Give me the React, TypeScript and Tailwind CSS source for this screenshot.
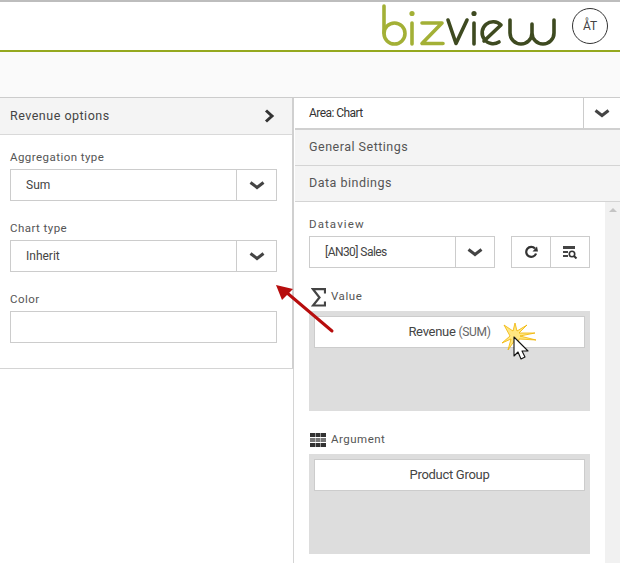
import type { ReactNode } from "react";

const font = { fontFamily: "Roboto, sans-serif" };

function Logo() {
  return (
    <svg width="178" height="48" viewBox="0 2 178 48" fill="none" strokeLinecap="round" strokeLinejoin="round">
      <g stroke="#a3b036" strokeWidth="3.6">
        <path d="M3 6V33" />
        <circle cx="13.5" cy="33.5" r="10.5" />
        <path d="M31 23V44" />
        <path d="M41 23H61L41 43.5H62" />
      </g>
      <circle cx="31" cy="13.5" r="2.6" fill="#a3b036" />
      <g stroke="#3e4a20" strokeWidth="3.6">
        <path d="M67 20L75 43.5L86 20" />
        <path d="M93 23V44" />
        <path d="M103 41L120 25A11 11 0 1 0 118 42" />
        <path d="M129 20V33A11 11 0 0 0 151 33V24V33A11 11 0 0 0 173 33V20" />
      </g>
      <circle cx="93" cy="13.5" r="2.6" fill="#3e4a20" />
    </svg>
  );
}

function Chevron() {
  return (
    <svg width="16" height="9" viewBox="0 0 16 9" fill="none">
      <path d="M1.5 1.5L8 6.5L14.5 1.5" stroke="#444444" strokeWidth="3" />
    </svg>
  );
}

function Select({
  value,
  divider = "w-[40px]",
  className = "",
  textClass = "",
}: {
  value: string;
  divider?: string;
  className?: string;
  textClass?: string;
}) {
  return (
    <div className={`flex h-[32px] border border-[#cccccc] bg-white ${className}`}>
      <span className={`flex flex-1 items-center pl-[15px] text-[12px] text-[#444444] ${textClass}`}>{value}</span>
      <span className={`flex items-center justify-center border-l border-[#cccccc] ${divider}`}>
        <Chevron />
      </span>
    </div>
  );
}

function Field({ label, children }: { label: string; children: ReactNode }) {
  return (
    <div>
      <div className="h-[17px] text-[11.5px] leading-[17px] tracking-[0.45px] text-[#555555]">{label}</div>
      <div className="mt-[3px]">{children}</div>
    </div>
  );
}

function DropZone({ className, children }: { className: string; children: ReactNode }) {
  return (
    <div className={`h-[100px] w-[281px] bg-[#dddddd] p-[5px] ${className}`}>
      <div className="flex h-[32px] items-center justify-center border border-[#cccccc] bg-white text-[13px] tracking-[-0.3px] text-[#444444]">
        {children}
      </div>
    </div>
  );
}

function Section({ title }: { title: string }) {
  return (
    <div className="flex h-[36px] items-center border-b border-[#d4d4d4] bg-[#f4f4f4] pl-[14px] text-[12.5px] tracking-[0.5px] text-[#555555]">
      {title}
    </div>
  );
}

export default function App() {
  return (
    <div style={font} className="relative h-[563px] w-[620px] overflow-hidden bg-white">
      <header className="flex h-[52px] items-start justify-end border-t-2 border-b-2 border-t-[#bdbdbd] border-b-[#94a81e] bg-white">
        <div className="mr-[13px]">
          <Logo />
        </div>
        <div className="mt-[6px] mr-[12px] flex h-[36px] w-[36px] items-center justify-center rounded-full border border-[#333333] text-[12px] text-[#444444]">
          ÅT
        </div>
      </header>
      <div className="h-[46px] border-b border-[#cccccc] bg-[#fafafa]" />

      <div className="flex h-[465px]">
        <div className="flex w-[294px] flex-col">
          <aside className="h-[271px] border-r-2 border-b border-[#d0d0d0] border-b-[#d4d4d4]">
            <div className="flex h-[37px] items-center justify-between border-b border-[#d9d9d9] bg-[#f4f4f4] pr-[17px] pl-[10px] text-[12.5px] tracking-[0.5px] text-[#444444]">
              Revenue options
              <svg width="11" height="14" viewBox="0 0 11 14" fill="none">
                <path d="M2 1.5L8 7L2 12.5" stroke="#333333" strokeWidth="3" />
              </svg>
            </div>
            <div className="flex flex-col gap-[19px] pt-[14px] pr-[15px] pl-[10px]">
              <Field label="Aggregation type">
                <Select value="Sum" />
              </Field>
              <Field label="Chart type">
                <Select value="Inherit" />
              </Field>
              <Field label="Color">
                <div className="h-[32px] border border-[#cccccc] bg-white" />
              </Field>
            </div>
          </aside>
          <div className="flex-1 border-r border-[#d4d4d4]" />
        </div>

        <div className="flex min-w-0 flex-1 flex-col pl-[1px]">
          <div className="flex h-[32px] border-b-2 border-[#d0d0d0] bg-white">
            <span className="flex flex-1 items-center pl-[14px] text-[12px] tracking-[-0.55px] text-[#333333]">Area: Chart</span>
            <span className="flex w-[37px] items-center justify-center border-l border-[#cccccc]">
              <Chevron />
            </span>
          </div>
          <Section title="General Settings" />
          <Section title="Data bindings" />
          <div className="flex flex-1">
            <div className="flex-1 pt-[14px] pl-[14px]">
              <div className="h-[17px] text-[11.5px] leading-[17px] tracking-[1.1px] text-[#555555]">Dataview</div>
              <div className="mt-[3px] flex w-[281px] justify-between">
                <Select value="[AN30] Sales" divider="w-[39px]" className="w-[186px]" textClass="tracking-[-0.55px]" />
                <div className="flex h-[32px] w-[79px] border border-[#cccccc]">
                  <span className="flex flex-1 items-center justify-center border-r border-[#cccccc]">
                    <svg width="14" height="14" viewBox="0 0 14 14" fill="none">
                      <path d="M11 3.6A5 5 0 1 0 12 8.5" stroke="#333333" strokeWidth="2.2" />
                      <path d="M8.5 6.5H14L13 1.5Z" fill="#333333" />
                    </svg>
                  </span>
                  <span className="flex flex-1 items-center justify-center">
                    <svg width="16" height="14" viewBox="0 0 16 14">
                      <path d="M1 1h12v3H1zM1 6h5v2H1zM1 10h5v2H1z" fill="#444444" />
                      <circle cx="10" cy="9" r="2.7" fill="none" stroke="#333333" strokeWidth="1.6" />
                      <path d="M12 11l2.5 2.5" stroke="#333333" strokeWidth="2" />
                    </svg>
                  </span>
                </div>
              </div>
              <div className="mt-[19px] flex h-[20px] items-center gap-[5px] pl-[2px]">
                <svg width="15" height="19" viewBox="0 0 15 19">
                  <path d="M14 5.5V1.2H2L8.5 9.5L2 17.5H14V13.5" fill="none" stroke="#444444" strokeWidth="2.2" />
                </svg>
                <span className="text-[11.5px] tracking-[0.55px] text-[#555555]">Value</span>
              </div>
              <DropZone className="mt-[4px]">
                Revenue&nbsp;<span className="text-[12px] text-[#666666]">(SUM)</span>
              </DropZone>
              <div className="mt-[20px] flex h-[18px] items-center gap-[5px] pl-[1px]">
                <svg width="16" height="15" viewBox="0 0 16 15">
                  <path d="M0 0h5v4H0zM5.5 0h5v4h-5zM11 0h5v4h-5z" fill="#333333" />
                  <path d="M0 5h5v4H0zM5.5 5h5v4h-5zM11 5h5v4h-5z" fill="#777777" />
                  <path d="M0 10h5v4H0zM5.5 10h5v4h-5zM11 10h5v4h-5z" fill="#333333" />
                </svg>
                <span className="text-[11.5px] tracking-[0.5px] text-[#555555]">Argument</span>
              </div>
              <DropZone className="mt-[5px]">Product Group</DropZone>
            </div>
            <div className="flex w-[15px] justify-center bg-[#f1f1f1] pt-[6px]">
              <span className="h-0 w-0 border-x-[4px] border-b-[4px] border-x-transparent border-b-[#c4c4c4]" />
            </div>
          </div>
        </div>
      </div>

      {/* callouts painted over the shot */}
      <svg className="absolute top-[280px] left-[272px]" width="66" height="56" viewBox="0 0 66 56">
        <path d="M60 51L14 12" stroke="#b70d0d" strokeWidth="3" strokeLinecap="round" />
        <path d="M4 5L21 9L10 20Z" fill="#b70d0d" />
      </svg>
      <svg className="absolute top-[322px] left-[498px]" width="44" height="46" viewBox="0 0 44 46">
        <path
          d="M17 1L19 9L29 3L21 11L37 11L22 14L38 18L21 17L20 24L17 18L10 28L13 17L4 21L12 14L6 3L15 9Z"
          fill="#ffe680"
          stroke="#f0b400"
          strokeWidth="0.8"
          strokeLinejoin="round"
        />
        <path d="M16 15V34L20 30L23 37L27 35L24 29H30Z" fill="#ffffff" stroke="#111111" strokeWidth="1.1" strokeLinejoin="round" />
      </svg>
    </div>
  );
}
